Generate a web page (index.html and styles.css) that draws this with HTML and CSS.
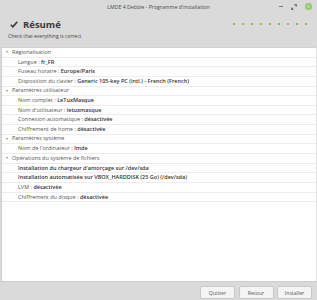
FILE: index.html
```html
<!DOCTYPE html>
<html lang="fr">
<head>
<meta charset="utf-8">
<link rel="stylesheet" href="styles.css">
</head>
<body>
<div class="window">
  <div class="titlebar">
    <span class="title">LMDE 4 Debbie - Programme d'installation</span>
    <div class="controls">
      <span class="ctl-min"></span>
      <svg class="ctl-max" width="6" height="6" viewBox="0 0 6 6"><path d="M3.5 0.5h2v2M5.5 0.5L3.8 2.2M2.5 5.5h-2v-2M0.5 5.5L2.2 3.8" stroke="#666" stroke-width="0.9" fill="none"/></svg>
      <span class="ctl-close"></span>
    </div>
  </div>
  <div class="header">
    <div class="head-row">
      <div class="heading">
        <svg class="check" width="8" height="7" viewBox="0 0 8 7"><path d="M0.8 3.8L2.8 5.8L7.2 0.9" stroke="#3c3c3c" stroke-width="1.6" fill="none"/></svg>
        <span class="head-title">Résumé</span>
      </div>
      <div class="dots">
        <span></span><span></span><span></span><span></span><span></span><span></span><span></span><span></span><span></span>
      </div>
    </div>
    <div class="subtitle">Check that everything is correct</div>
  </div>
  <div class="list">
    <div class="row parent"><span class="tri"></span>Régionalisation</div>
    <div class="row child">Langue : <b>fr_FR</b></div>
    <div class="row child">Fuseau horaire : <b>Europe/Paris</b></div>
    <div class="row child">Disposition du clavier : <b>Generic 105-key PC (intl.) - French (French)</b></div>
    <div class="row parent"><span class="tri"></span>Paramètres utilisateur</div>
    <div class="row child">Nom complet : <b>LeTuxMasque</b></div>
    <div class="row child">Nom d'utilisateur : <b>letuxmasque</b></div>
    <div class="row child">Connexion automatique : <b>désactivée</b></div>
    <div class="row child">Chiffrement de home : <b>désactivée</b></div>
    <div class="row parent"><span class="tri"></span>Paramètres système</div>
    <div class="row child">Nom de l'ordinateur : <b>lmde</b></div>
    <div class="row parent"><span class="tri"></span>Opérations du système de fichiers</div>
    <div class="row child"><b>Installation du chargeur d'amorçage sur /dev/sda</b></div>
    <div class="row child"><b>Installation automatisée sur VBOX_HARDDISK (25 Go) (/dev/sda)</b></div>
    <div class="row child">LVM : <b>désactivée</b></div>
    <div class="row child last">Chiffrement du disque : <b>désactivée</b></div>
  </div>
  <div class="footer">
    <button class="btn">Quitter</button>
    <button class="btn">Retour</button>
    <button class="btn">Installer</button>
  </div>
</div>
</body>
</html>
```
FILE: styles.css
```css
html, body {
  margin: 0;
  padding: 0;
}
body {
  width: 317px;
  height: 300px;
  background: #dadada;
  font-family: "Open Sans", "Noto Sans", sans-serif;
  color: #3c3c3c;
  overflow: hidden;
}
.window {
  display: flex;
  flex-direction: column;
  height: 300px;
}
.titlebar {
  height: 13px;
  display: flex;
  align-items: center;
  justify-content: center;
  position: relative;
}
.title {
  font-size: 5.2px;
  color: #4a4a4a;
}
.controls {
  position: absolute;
  right: 5px;
  top: 2px;
  display: flex;
  align-items: center;
  gap: 8px;
  height: 9px;
}
.ctl-min {
  width: 4px;
  height: 1px;
  background: #777;
}
.ctl-close {
  width: 7px;
  height: 7px;
  border-radius: 50%;
  background: #8fc26a;
  box-shadow: inset 0 0 0 1.5px #9ccd77;
  position: relative;
}
.ctl-close::after {
  content: "";
  position: absolute;
  left: 2px;
  top: 2px;
  width: 3px;
  height: 3px;
  border-radius: 50%;
  background: #b9d9a1;
}
.header {
  padding: 5px 8px 0 8px;
  height: 29px;
}
.head-row {
  display: flex;
  align-items: center;
  justify-content: space-between;
  height: 12px;
}
.heading {
  display: flex;
  align-items: center;
  gap: 5px;
  padding-left: 2px;
}
.head-title {
  font-size: 9.5px;
  font-weight: bold;
  color: #3a3a3a;
}
.dots {
  display: flex;
  align-items: center;
  gap: 7px;
  padding-right: 2px;
  height: 2px;
}
.dots span {
  width: 2px;
  height: 2px;
  border-radius: 50%;
  background: #6fb33c;
}
.subtitle {
  font-size: 5px;
  margin-top: 3px;
  color: #444;
}
.list {
  background: #fff;
  margin: 0 0 0 1px;
  border-left: 1px solid #cfcfcf;
  border-right: 1px solid #e2e2e2;
  border-top: 1px solid #d2d2d2;
  height: 233px;
  font-size: 5.5px;
  color: #555;
}
.row {
  height: 9.65px;
  line-height: 9.65px;
  border-bottom: 0.3px solid #ececec;
  box-sizing: border-box;
  white-space: nowrap;
}
.row b {
  color: #333;
  font-weight: 600;
}
.parent {
  padding-left: 4px;
  display: flex;
  align-items: center;
}
.tri {
  width: 0;
  height: 0;
  border-left: 1.5px solid transparent;
  border-right: 1.5px solid transparent;
  border-top: 2px solid #888;
  margin-right: 4px;
}
.child {
  padding-left: 16px;
}
.footer {
  display: flex;
  justify-content: flex-end;
  gap: 3.5px;
  padding: 4px 5px 0 0;
  border-top: 1px solid #cccccc;
}
.btn {
  font-family: inherit;
  font-size: 5.2px;
  color: #555;
  background: #f4f4f4;
  border: 1px solid #c8c8c8;
  border-radius: 2px;
  height: 13px;
  padding: 0;
  width: 35px;
}
```
